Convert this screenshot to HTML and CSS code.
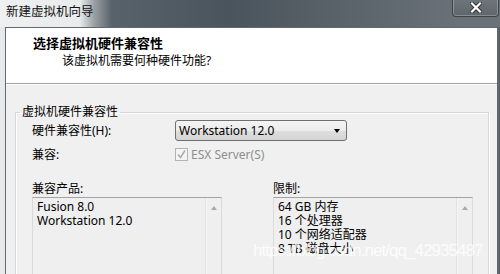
FILE: index.html
```html
<!DOCTYPE html>
<html lang="zh-CN">
<head>
    <meta charset="UTF-8">
    <title>新建虚拟机向导</title>
    <link rel="stylesheet" href="styles.css">
</head>
<body>
    <div class="window">
        <div class="titlebar">
            <span class="title">新建虚拟机向导</span>
            <div class="close-btn">
                <svg width="12" height="11" viewBox="0 0 12 11">
                    <path d="M2 1.5 L10 9.5 M10 1.5 L2 9.5" stroke="#2b3035" stroke-width="4" stroke-linecap="square"/>
                    <path d="M2 1.5 L10 9.5 M10 1.5 L2 9.5" stroke="#fff" stroke-width="2.2" stroke-linecap="square"/>
                </svg>
            </div>
        </div>

        <div class="client">
            <div class="header">
                <div class="header-title">选择虚拟机硬件兼容性</div>
                <div class="header-sub">该虚拟机需要何种硬件功能?</div>
            </div>

            <div class="content">
                <fieldset class="group">
                    <legend>虚拟机硬件兼容性</legend>
                    <div class="group-body">
                        <div class="form-row">
                            <span class="label">硬件兼容性(H):</span>
                            <div class="select">
                                <span>Workstation 12.0</span>
                                <span class="arrow"></span>
                            </div>
                        </div>
                        <div class="form-row row-check">
                            <span class="label">兼容:</span>
                            <span class="check">
                                <span class="box">
                                    <svg width="11" height="11" viewBox="0 0 11 11">
                                        <path d="M2 5.5 L4.5 8.5 L9 1.5" fill="none" stroke="#a7a7a7" stroke-width="1.4"/>
                                    </svg>
                                </span>
                                ESX Server(S)
                            </span>
                        </div>

                        <div class="lists">
                            <div class="list-col">
                                <div class="list-label">兼容产品:</div>
                                <div class="listbox">
                                    <ul class="items">
                                        <li>Fusion 8.0</li>
                                        <li>Workstation 12.0</li>
                                    </ul>
                                    <div class="scroll"><span class="up"></span></div>
                                </div>
                            </div>
                            <div class="list-col">
                                <div class="list-label">限制:</div>
                                <div class="listbox">
                                    <ul class="items">
                                        <li>64 GB 内存</li>
                                        <li>16 个处理器</li>
                                        <li>10 个网络适配器</li>
                                        <li>8 TB 磁盘大小</li>
                                    </ul>
                                    <div class="scroll"><span class="up"></span></div>
                                </div>
                            </div>
                        </div>
                    </div>
                </fieldset>
            </div>
        </div>

        <div class="watermark">https://blog.csdn.net/qq_42935487</div>
    </div>
</body>
</html>
```

FILE: styles.css
```css
:root {
    --face: #f0f0f0;
    --frame-dark: #5c6369;
    --text: #000;
    --disabled: #8e8e8e;
    --font-ui: "Noto Sans", "Noto Sans CJK SC", sans-serif;
}
* {
    box-sizing: border-box;
    margin: 0;
    padding: 0;
}
body {
    width: 500px;
    height: 274px;
    overflow: hidden;
    font-family: var(--font-ui);
    font-size: 12px;
    color: var(--text);
    background: #e7e9ea;
}
.window {
    position: relative;
    display: flex;
    flex-direction: column;
    width: 500px;
    height: 274px;
    border-left: 5px solid #e7e9ea;
    border-right: 2px solid var(--frame-dark);
}
.titlebar {
    display: flex;
    align-items: flex-start;
    height: 27px;
    margin-left: -5px;
    margin-right: -2px;
    padding-left: 6px;
    background: linear-gradient(to right, #eff0f1 0, #e8eaeb 80px, #9aa1a6 94px, #58626a 112px, #4a545c 230px, #5b646b 350px, #6a7278 460px);
}
.title {
    font-size: 12.5px;
    line-height: 24px;
    color: #111;
}
.close-btn {
    display: flex;
    align-items: center;
    justify-content: center;
    width: 47px;
    height: 18px;
    margin-left: auto;
    margin-right: 1px;
    margin-top: -1px;
    border: 1px solid #3d4449;
    border-top: none;
    border-radius: 0 0 4px 4px;
    box-shadow: inset 0 0 0 1px rgba(255, 255, 255, 0.25);
    background: linear-gradient(#6e767c, #5e666c);
}
.close-btn svg {
    display: block;
}
.client {
    flex: 1;
    overflow: hidden;
    border: 1px solid #62686e;
    border-bottom: none;
    background: var(--face);
}
.header {
    height: 56px;
    padding: 6px 0 0 27px;
    background: #fff;
    border-bottom: 1px solid #a0a0a0;
    line-height: 18px;
}
.header-title {
    font-size: 13px;
    font-weight: bold;
}
.header-sub {
    margin-left: 29px;
}
.content {
    border-top: 1px solid #fff;
}
.group {
    margin: 20px 8px 0 9px;
    padding: 0 0 0 4px;
    height: 200px;
    border: 1px solid #d5d8da;
    box-shadow: inset 1px 1px 0 #fff, 1px 1px 0 #fff;
}
.group legend {
    padding: 0 2px;
    line-height: 14px;
}
.group-body {
    padding: 1px 0 0 12px;
}
.form-row {
    display: grid;
    grid-template-columns: 143px auto;
    align-items: center;
    line-height: 14px;
}
.row-check {
    margin-top: 6px;
    height: 15px;
}
.select {
    display: flex;
    align-items: center;
    width: 172px;
    height: 21px;
    padding: 0 6px 0 3px;
    border: 1px solid #707070;
    border-radius: 3px;
    background: linear-gradient(#f4f4f4, #ececec 50%, #dfdfdf 51%, #d4d4d4);
}
.arrow {
    margin-left: auto;
    width: 0;
    height: 0;
    border-left: 3.5px solid transparent;
    border-right: 3.5px solid transparent;
    border-top: 4px solid #000;
}
.check {
    display: flex;
    align-items: center;
    gap: 3px;
    color: var(--disabled);
}
.check .box {
    display: flex;
    align-items: center;
    justify-content: center;
    width: 13px;
    height: 13px;
    border: 1px solid #b4b4b4;
    background: #f4f4f4;
}
.lists {
    display: grid;
    grid-template-columns: 190px 200px;
    column-gap: 51px;
    margin-top: 20px;
}
.list-label {
    line-height: 14px;
    margin-bottom: 1px;
}
.listbox {
    display: flex;
    height: 90px;
    border: 1px solid #dadada;
    border-top-color: #a3a3a3;
    background: #efefef;
}
.items {
    flex: 1;
    list-style: none;
    padding: 2px 0 0 4px;
    line-height: 14px;
}
.scroll {
    display: flex;
    justify-content: center;
    width: 16px;
    padding-top: 8px;
    border-left: 1px solid #e2e2e2;
    box-shadow: inset 1px 0 0 #f7f7f7;
}
.up {
    width: 0;
    height: 0;
    border-left: 3.5px solid transparent;
    border-right: 3.5px solid transparent;
    border-bottom: 4px solid #a9a9a9;
}
.watermark {
    position: absolute;
    left: 248px;
    top: 240px;
    font-family: "Liberation Sans", sans-serif;
    font-size: 17px;
    letter-spacing: -0.95px;
    line-height: 21px;
    color: rgba(255, 255, 255, 0.8);
    white-space: nowrap;
}
```
